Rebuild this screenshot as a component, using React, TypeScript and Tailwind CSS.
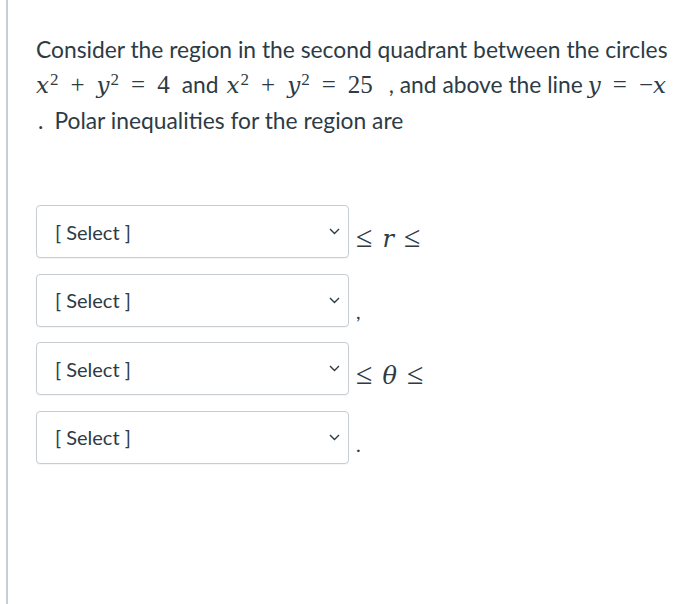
import React from "react";

const serif = "font-['Liberation_Serif','DejaVu_Serif',serif]";
const italicSerif = "font-['DejaVu_Serif','Liberation_Serif',serif] italic";

function Chevron() {
  return (
    <svg width="11" height="7" viewBox="0 0 11 7" className="shrink-0">
      <polyline points="1,1 5.5,5.5 10,1" fill="none" stroke="#2d3b45" strokeWidth="1.4" />
    </svg>
  );
}

function SelectBox() {
  return (
    <div className="flex items-center justify-between w-[313px] h-[53px] border border-[#c7cdd1] rounded-[4px] bg-white pl-[18px] pr-[8px] shadow-[0_1px_1px_rgba(0,0,0,0.04)]">
      <span className="text-[20px] text-[#2d3b45]">[ Select ]</span>
      <Chevron />
    </div>
  );
}

function V({ children }: { children: React.ReactNode }) {
  return <span className={`${italicSerif} text-[23px]`}>{children}</span>;
}

function N({ children }: { children: React.ReactNode }) {
  return <span className={`${serif} text-[25px]`}>{children}</span>;
}

function Op({ children }: { children: React.ReactNode }) {
  return <span className={`${serif} text-[25px] mx-[12px]`}>{children}</span>;
}

function Sq() {
  return <sup className={`${serif} text-[17px] ml-[1px]`}>2</sup>;
}

function Between({ v }: { v: string }) {
  return (
    <span className="ml-[7px] mt-[10px] flex items-baseline gap-[10px] leading-none">
      <span className={`${serif} text-[30px]`}>≤</span>
      <span className={`${italicSerif} text-[24px]`}>{v}</span>
      <span className={`${serif} text-[30px]`}>≤</span>
    </span>
  );
}

export default function App() {
  return (
    <div className="w-[700px] h-[604px] bg-white text-[#2d3b45] flex font-['Lato','Open_Sans',sans-serif]">
      <div className="w-[6px] shrink-0" />
      <div className="w-[2px] shrink-0 bg-[#c7cdd1]" />
      <div className="flex-1 pl-[28px] pt-[32px]">
        <div className="text-[22.8px] leading-[35px] whitespace-nowrap">
          <div>Consider the region in the second quadrant between the circles</div>
          <div className="flex items-baseline">
            <V>x</V>
            <Sq />
            <Op>+</Op>
            <V>y</V>
            <Sq />
            <Op>=</Op>
            <N>4</N>
            <span className="ml-[12px] mr-[8px]">and</span>
            <V>x</V>
            <Sq />
            <Op>+</Op>
            <V>y</V>
            <Sq />
            <Op>=</Op>
            <N>25</N>
            <span className="ml-[16px] mr-[5px]">, and above the line</span>
            <V>y</V>
            <Op>=</Op>
            <N>−</N>
            <V>x</V>
          </div>
          <div>
            <span className="ml-[2px]">.</span>
            <span className="ml-[11px]">Polar inequalities for the region are</span>
          </div>
        </div>

        <div className="mt-[67px] flex flex-col gap-[15.5px]">
          <div className="flex items-center h-[53px]">
            <SelectBox />
            <Between v="r" />
          </div>
          <div className="flex items-end h-[53px]">
            <SelectBox />
            <span className="ml-[7px] mb-[6px] text-[20px] leading-none">,</span>
          </div>
          <div className="flex items-center h-[53px]">
            <SelectBox />
            <Between v="θ" />
          </div>
          <div className="flex items-end h-[53px]">
            <SelectBox />
            <span className="ml-[7px] mb-[10px] text-[20px] leading-none">.</span>
          </div>
        </div>
      </div>
    </div>
  );
}
